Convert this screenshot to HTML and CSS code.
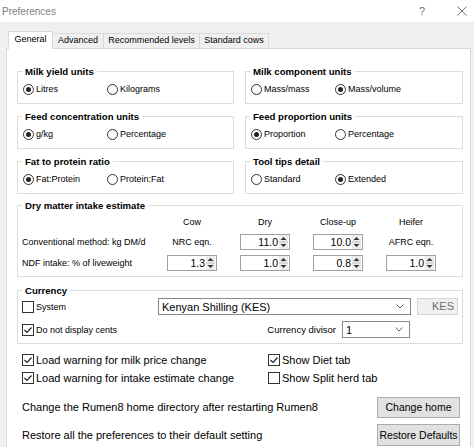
FILE: index.html
```html
<!DOCTYPE html>
<html>
<head>
<meta charset="utf-8">
<title>Preferences</title>
<link rel="stylesheet" href="styles.css">
</head>
<body>
<div class="titlebar">
  <span class="title">Preferences</span>
  <span class="tb-btns">
    <span class="help">?</span>
    <span class="close"><svg width="10" height="10" viewBox="0 0 10 10"><path d="M0.5 0.5L9.5 9.5M9.5 0.5L0.5 9.5" stroke="#707070" stroke-width="1" fill="none"/></svg></span>
  </span>
</div>
<div class="dialog">
  <div class="tabs">
    <div class="tab active w-general">General</div>
    <div class="tab w-adv">Advanced</div>
    <div class="tab w-rec">Recommended levels</div>
    <div class="tab w-std">Standard cows</div>
  </div>
  <div class="panel">
    <div class="units">
      <fieldset class="group">
        <legend>Milk yield units</legend>
        <div class="opts">
          <span class="opt"><span class="radio on"></span>Litres</span>
          <span class="opt"><span class="radio"></span>Kilograms</span>
        </div>
      </fieldset>
      <fieldset class="group">
        <legend>Milk component units</legend>
        <div class="opts">
          <span class="opt"><span class="radio"></span>Mass/mass</span>
          <span class="opt"><span class="radio on"></span>Mass/volume</span>
        </div>
      </fieldset>
      <fieldset class="group">
        <legend>Feed concentration units</legend>
        <div class="opts">
          <span class="opt"><span class="radio on"></span>g/kg</span>
          <span class="opt"><span class="radio"></span>Percentage</span>
        </div>
      </fieldset>
      <fieldset class="group">
        <legend>Feed proportion units</legend>
        <div class="opts">
          <span class="opt"><span class="radio on"></span>Proportion</span>
          <span class="opt"><span class="radio"></span>Percentage</span>
        </div>
      </fieldset>
      <fieldset class="group">
        <legend>Fat to protein ratio</legend>
        <div class="opts">
          <span class="opt"><span class="radio on"></span>Fat:Protein</span>
          <span class="opt"><span class="radio"></span>Protein:Fat</span>
        </div>
      </fieldset>
      <fieldset class="group">
        <legend>Tool tips detail</legend>
        <div class="opts">
          <span class="opt"><span class="radio"></span>Standard</span>
          <span class="opt"><span class="radio on"></span>Extended</span>
        </div>
      </fieldset>
    </div>

    <fieldset class="group dmi">
      <legend>Dry matter intake estimate</legend>
      <div class="dmi-grid">
        <span></span>
        <span class="c">Cow</span>
        <span class="c">Dry</span>
        <span class="c">Close-up</span>
        <span class="c">Heifer</span>

        <span>Conventional method: kg DM/d</span>
        <span class="c">NRC eqn.</span>
        <span class="spin"><span class="val">11.0</span><svg class="arr" width="9" height="14" viewBox="0 0 9 14"><rect x="0" y="0" width="9" height="14" fill="#ececec"/><line x1="0" y1="7" x2="9" y2="7" stroke="#c4c4c4" stroke-width="1"/><path d="M1.5 5L4.5 2L7.5 5Z" fill="#333"/><path d="M1.5 9L4.5 12L7.5 9Z" fill="#333"/></svg></span>
        <span class="spin"><span class="val">10.0</span><svg class="arr" width="9" height="14" viewBox="0 0 9 14"><rect x="0" y="0" width="9" height="14" fill="#ececec"/><line x1="0" y1="7" x2="9" y2="7" stroke="#c4c4c4" stroke-width="1"/><path d="M1.5 5L4.5 2L7.5 5Z" fill="#333"/><path d="M1.5 9L4.5 12L7.5 9Z" fill="#333"/></svg></span>
        <span class="c">AFRC eqn.</span>

        <span>NDF intake: % of liveweight</span>
        <span class="spin"><span class="val">1.3</span><svg class="arr" width="9" height="14" viewBox="0 0 9 14"><rect x="0" y="0" width="9" height="14" fill="#ececec"/><line x1="0" y1="7" x2="9" y2="7" stroke="#c4c4c4" stroke-width="1"/><path d="M1.5 5L4.5 2L7.5 5Z" fill="#333"/><path d="M1.5 9L4.5 12L7.5 9Z" fill="#333"/></svg></span>
        <span class="spin"><span class="val">1.0</span><svg class="arr" width="9" height="14" viewBox="0 0 9 14"><rect x="0" y="0" width="9" height="14" fill="#ececec"/><line x1="0" y1="7" x2="9" y2="7" stroke="#c4c4c4" stroke-width="1"/><path d="M1.5 5L4.5 2L7.5 5Z" fill="#333"/><path d="M1.5 9L4.5 12L7.5 9Z" fill="#333"/></svg></span>
        <span class="spin"><span class="val">0.8</span><svg class="arr" width="9" height="14" viewBox="0 0 9 14"><rect x="0" y="0" width="9" height="14" fill="#ececec"/><line x1="0" y1="7" x2="9" y2="7" stroke="#c4c4c4" stroke-width="1"/><path d="M1.5 5L4.5 2L7.5 5Z" fill="#333"/><path d="M1.5 9L4.5 12L7.5 9Z" fill="#333"/></svg></span>
        <span class="spin"><span class="val">1.0</span><svg class="arr" width="9" height="14" viewBox="0 0 9 14"><rect x="0" y="0" width="9" height="14" fill="#ececec"/><line x1="0" y1="7" x2="9" y2="7" stroke="#c4c4c4" stroke-width="1"/><path d="M1.5 5L4.5 2L7.5 5Z" fill="#333"/><path d="M1.5 9L4.5 12L7.5 9Z" fill="#333"/></svg></span>
      </div>
    </fieldset>

    <fieldset class="group currency">
      <legend>Currency</legend>
      <div class="cur-row">
        <span class="chk-label"><span class="chk"></span>System</span>
        <span class="select sel-cur"><span>Kenyan Shilling (KES)</span><svg width="8" height="5" viewBox="0 0 8 5"><path d="M0.5 0.5L4 4L7.5 0.5" stroke="#606060" fill="none" stroke-width="1"/></svg></span>
        <span class="kes">KES</span>
      </div>
      <div class="cur-row">
        <span class="chk-label"><span class="chk"><svg width="10" height="10" viewBox="0 0 10 10"><path d="M1.5 5L4 7.5L8.5 2.5" stroke="#222" stroke-width="1.2" fill="none"/></svg></span>Do not display cents</span>
        <span class="div-label">Currency divisor</span>
        <span class="select sel-div"><span>1</span><svg width="8" height="5" viewBox="0 0 8 5"><path d="M0.5 0.5L4 4L7.5 0.5" stroke="#606060" fill="none" stroke-width="1"/></svg></span>
        <span class="div-spacer"></span>
      </div>
    </fieldset>

    <div class="checks">
      <span class="big-chk"><span class="chk"><svg width="10" height="10" viewBox="0 0 10 10"><path d="M1.5 5L4 7.5L8.5 2.5" stroke="#222" stroke-width="1.2" fill="none"/></svg></span>Load warning for milk price change</span>
      <span class="big-chk"><span class="chk"><svg width="10" height="10" viewBox="0 0 10 10"><path d="M1.5 5L4 7.5L8.5 2.5" stroke="#222" stroke-width="1.2" fill="none"/></svg></span>Show Diet tab</span>
      <span class="big-chk"><span class="chk"><svg width="10" height="10" viewBox="0 0 10 10"><path d="M1.5 5L4 7.5L8.5 2.5" stroke="#222" stroke-width="1.2" fill="none"/></svg></span>Load warning for intake estimate change</span>
      <span class="big-chk"><span class="chk"></span>Show Split herd tab</span>
    </div>

    <div class="action first">
      <span>Change the Rumen8 home directory after restarting Rumen8</span>
      <span class="btn">Change home</span>
    </div>
    <div class="action second">
      <span>Restore all the preferences to their default setting</span>
      <span class="btn">Restore Defaults</span>
    </div>
  </div>
</div>
</body>
</html>
```

FILE: styles.css
```css
html, body {
  margin: 0;
  padding: 0;
}
body {
  width: 474px;
  height: 447px;
  overflow: hidden;
  background: #f0f0f0;
  font-family: "Liberation Sans", Arial, sans-serif;
  color: #000;
}

/* title bar */
.titlebar {
  height: 22px;
  background: #fff;
  display: flex;
  align-items: center;
  justify-content: space-between;
  padding-left: 2px;
}
.title {
  font-size: 10px;
  color: #808080;
}
.tb-btns {
  display: flex;
  align-items: center;
  height: 22px;
}
.help {
  width: 40px;
  text-align: center;
  font-size: 11px;
  color: #707070;
}
.close {
  width: 24px;
  margin-left: 8px;
  display: flex;
  justify-content: center;
  align-items: center;
}

/* tabs */
.tabs {
  display: flex;
  align-items: flex-end;
  height: 26px;
  padding-left: 8px;
  position: relative;
  z-index: 1;
}
.tab {
  box-sizing: border-box;
  height: 15px;
  border: 1px solid #d9d9d9;
  border-bottom: none;
  background: #f0f0f0;
  font-size: 9px;
  line-height: 13px;
  text-align: center;
  margin-left: -1px;
}
.tab.active {
  height: 18px;
  margin-bottom: -1px;
  background: #fff;
  line-height: 15px;
  margin-left: 0;
}
.w-general { width: 45px; }
.w-adv { width: 52px; }
.w-rec { width: 97px; }
.w-std { width: 70px; }

/* panel */
.panel {
  margin-left: 6px;
  width: 465px;
  height: 420px;
  box-sizing: border-box;
  border: 1px solid #d9d9d9;
  background: #fff;
  padding: 17px 7px 0 10px;
}

.units {
  display: grid;
  grid-template-columns: 217px 218px;
  column-gap: 11px;
  row-gap: 7px;
}

fieldset.group {
  margin: 0;
  padding: 5px 4px 7px;
  border: 1px solid #dcdcdc;
  min-width: 0;
}
legend {
  padding: 0 3px;
  font-weight: bold;
  font-size: 9.6px;
  line-height: 11px;
}

.opts {
  display: flex;
  align-items: center;
  height: 14px;
  font-size: 9px;
  padding-left: 1px;
}
.opt {
  width: 84px;
  display: inline-flex;
  align-items: center;
}
.radio {
  box-sizing: border-box;
  width: 11px;
  height: 11px;
  border: 1px solid #333;
  border-radius: 50%;
  background: #fff;
  margin-right: 2px;
  display: inline-flex;
  align-items: center;
  justify-content: center;
  flex: none;
}
.radio.on::after {
  content: "";
  width: 5px;
  height: 5px;
  border-radius: 50%;
  background: #222;
}

/* DMI */
fieldset.dmi {
  margin-top: 6px;
  padding-top: 4px;
  padding-bottom: 5px;
}
.dmi-grid {
  display: grid;
  grid-template-columns: 122px repeat(4, 50px);
  column-gap: 23px;
  grid-template-rows: 14px 16px 16px;
  row-gap: 5px;
  align-items: center;
  font-size: 9px;
}
.dmi-grid .c {
  text-align: center;
  white-space: nowrap;
}
.dmi-grid > span:not(.c):not(.spin) {
  white-space: nowrap;
}
.spin {
  box-sizing: border-box;
  width: 50px;
  height: 16px;
  border: 1px solid #a0a0a0;
  display: flex;
  align-items: center;
  justify-content: flex-end;
  font-size: 10.5px;
}
.spin .val {
  padding-right: 1px;
}
.spin .arr {
  margin-right: 1px;
  flex: none;
}

/* currency */
fieldset.currency {
  margin-top: 8px;
  padding-top: 2px;
  padding-bottom: 5px;
}
.cur-row {
  display: flex;
  align-items: center;
  height: 17px;
  font-size: 9px;
}
.cur-row + .cur-row {
  margin-top: 6px;
}
.chk-label {
  flex: 1;
  display: flex;
  align-items: center;
}
.chk {
  box-sizing: border-box;
  width: 12px;
  height: 12px;
  border: 1px solid #333;
  background: #fff;
  margin-right: 2px;
  display: inline-flex;
  align-items: center;
  justify-content: center;
  flex: none;
}
.select {
  box-sizing: border-box;
  height: 17px;
  border: 1px solid #8a8a8a;
  background: #fff;
  display: flex;
  align-items: center;
  justify-content: space-between;
  padding: 0 6px 0 3px;
  font-size: 11px;
}
.sel-cur {
  width: 253px;
}
.kes {
  box-sizing: border-box;
  width: 41px;
  height: 17px;
  margin-left: 6px;
  border: 1px solid #d4d4d4;
  background: #f0f0f0;
  color: #6d6d6d;
  font-size: 11px;
  text-align: right;
  padding-right: 3px;
  line-height: 15px;
}
.div-label {
  margin-right: 6px;
  font-size: 9.5px;
}
.sel-div {
  width: 68px;
  padding-right: 6px;
}
.div-spacer {
  width: 48px;
}

/* bottom checks */
.checks {
  margin-top: 7px;
  padding-left: 5px;
  display: grid;
  grid-template-columns: 246px auto;
  grid-template-rows: 18px 18px;
  font-size: 11px;
  line-height: 13px;
}
.big-chk {
  display: flex;
  align-items: center;
  height: 18px;
  white-space: nowrap;
}

.action {
  display: flex;
  align-items: center;
  justify-content: space-between;
  padding-left: 5px;
  font-size: 11px;
  line-height: 13px;
}
.action.first {
  margin-top: 10px;
}
.action.second {
  margin-top: 6px;
}
.btn {
  box-sizing: border-box;
  width: 83px;
  height: 21px;
  margin-right: 3px;
  background: #e1e1e1;
  border: 1px solid #adadad;
  display: flex;
  align-items: center;
  justify-content: center;
  font-size: 10.5px;
  white-space: nowrap;
}
.action.second .btn {
  height: 22px;
}
```
